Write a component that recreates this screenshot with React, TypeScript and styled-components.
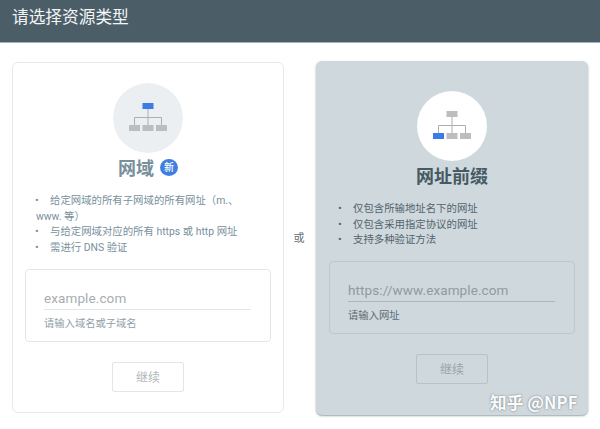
import React from "react";
import styled, { createGlobalStyle } from "styled-components";

const Global = createGlobalStyle`
  html, body { margin: 0; padding: 0; background: #fff; }
  body { width: 600px; height: 429px; overflow: hidden; font-family: Roboto, "Noto Sans CJK SC", sans-serif; }
  * { box-sizing: border-box; }
`;

const Page = styled.div`
  position: relative;
  width: 600px;
  height: 429px;
`;

const Header = styled.header`
  height: 43px;
  padding: 3px 12px 0;
  background: #4b5d67;
  border-bottom: 1px solid #9fb3bd;
  color: #f2f5f6;
  font-size: 16.7px;
  line-height: 26px;
  font-family: "Noto Sans CJK SC", sans-serif;
`;

const Main = styled.main`
  display: grid;
  grid-template-columns: 272px 32px 272px;
  align-items: start;
  padding: 18px 0 0 12px;
`;

const Card = styled.section<{ $active?: boolean }>`
  height: ${(p) => (p.$active ? 354 : 351)}px;
  margin-top: ${(p) => (p.$active ? 0 : 1)}px;
  padding: ${(p) => (p.$active ? "30px 13px 0" : "20px 12px 0")};
  display: flex;
  flex-direction: column;
  border-radius: 6px;
  background: ${(p) => (p.$active ? "#cfd8dc" : "#fff")};
  border: ${(p) => (p.$active ? "none" : "1px solid #e6e8ea")};
  box-shadow: ${(p) => (p.$active ? "0 1px 2px rgba(70,85,95,0.55)" : "none")};
`;

const Circle = styled.div<{ $active?: boolean }>`
  width: 70px;
  height: 70px;
  flex: none;
  align-self: center;
  display: flex;
  align-items: center;
  justify-content: center;
  border-radius: 50%;
  background: ${(p) => (p.$active ? "#fff" : "#eceff1")};
`;

const TitleRow = styled.div`
  height: 28px;
  display: flex;
  align-items: center;
  justify-content: center;
  gap: 6px;
`;

const Title = styled.h2<{ $active?: boolean }>`
  margin: 0;
  font: 700 18px/28px "Noto Sans CJK SC", sans-serif;
  color: ${(p) => (p.$active ? "#455a64" : "#78909c")};
`;

const Badge = styled.span`
  width: 18px;
  height: 17px;
  display: flex;
  align-items: center;
  justify-content: center;
  border-radius: 50%;
  background: #3f7fe0;
  color: #fff;
  font: 500 10px/1 "Noto Sans CJK SC", sans-serif;
`;

const Features = styled.ul<{ $active?: boolean }>`
  margin: 12px 0 0;
  padding: 0 8px 0 ${(p) => (p.$active ? 10 : 11)}px;
  list-style: none;
  font: 400 10.4px/15.7px Roboto, "Noto Sans CJK SC", sans-serif;
  color: ${(p) => (p.$active ? "#51646e" : "#78909c")};
`;

const Feature = styled.li`
  &::before {
    content: "•";
    display: inline-block;
    width: 15px;
    margin-left: -1px;
    font-size: 11px;
  }
`;

const InputBox = styled.div<{ $active?: boolean }>`
  flex: none;
  height: 73px;
  margin-top: 13px;
  padding: 18px 19px 0 18px;
  border-radius: 4px;
  border: 1px solid ${(p) => (p.$active ? "#bcc8ce" : "#e3e6e8")};
`;

const FieldText = styled.div<{ $active?: boolean }>`
  height: 22px;
  font: 400 13.5px/20px Roboto, sans-serif;
  letter-spacing: 0.1px;
  color: ${(p) => (p.$active ? "#8e9ba2" : "#a8adb0")};
  border-bottom: 1px solid ${(p) => (p.$active ? "#abb7bd" : "#e3e6e8")};
`;

const Helper = styled.div<{ $active?: boolean }>`
  margin-top: 5px;
  font: 400 10.3px/15px "Noto Sans CJK SC", sans-serif;
  color: ${(p) => (p.$active ? "#5c6c75" : "#90a0a8")};
`;

const Continue = styled.button<{ $active?: boolean }>`
  width: 72px;
  height: 30px;
  flex: none;
  align-self: center;
  margin-top: 20px;
  padding: 0;
  border-radius: 2px;
  border: 1px solid ${(p) => (p.$active ? "#b8c3c9" : "#e3e6e8")};
  background: transparent;
  color: ${(p) => (p.$active ? "#98a5ac" : "#b2b8bb")};
  font: 400 12px/1 "Noto Sans CJK SC", sans-serif;
`;

const Or = styled.div`
  align-self: start;
  margin-top: 168px;
  padding-right: 2px;
  text-align: center;
  font: 400 11px/16px "Noto Sans CJK SC", sans-serif;
  color: #5f6b72;
`;

const Watermark = styled.div`
  position: absolute;
  left: 490px;
  top: 390px;
  font: 700 16.6px/24px "Noto Sans CJK SC", sans-serif;
  letter-spacing: 0.1px;
  color: #fff;
  opacity: 0.92;
  text-shadow: 0 0 2px rgba(70, 80, 90, 0.8);
  white-space: nowrap;
`;

const SiteIcon = ({ highlight }: { highlight: "top" | "left" }) => {
  const blue = "#3b7de6";
  const gray = "#bdbdbd";
  return (
    <svg width="40" height="30" viewBox="0 0 40 30" aria-hidden="true">
      <path d="M20 6V22M6.500 22V14.500H33.500V22" fill="none" stroke="#aeaeae" strokeWidth="1" />
      <rect x="14.500" y="0" width="11" height="6" fill={highlight === "top" ? blue : gray} />
      <rect x="1" y="22" width="11" height="6" fill={highlight === "left" ? blue : gray} />
      <rect x="14.500" y="22" width="11" height="6" fill={gray} />
      <rect x="28" y="22" width="11" height="6" fill={gray} />
    </svg>
  );
};

export default function App() {
  return (
    <Page>
      <Global />
      <Header>请选择资源类型</Header>
      <Main>
        <Card>
          <Circle>
            <SiteIcon highlight="top" />
          </Circle>
          <TitleRow>
            <Title>网域</Title>
            <Badge>新</Badge>
          </TitleRow>
          <Features>
            <Feature>给定网域的所有子网域的所有网址（m.、www. 等）</Feature>
            <Feature>与给定网域对应的所有 https 或 http 网址</Feature>
            <Feature>需进行 DNS 验证</Feature>
          </Features>
          <InputBox>
            <FieldText>example.com</FieldText>
            <Helper>请输入域名或子域名</Helper>
          </InputBox>
          <Continue>继续</Continue>
        </Card>
        <Or>或</Or>
        <Card $active>
          <Circle $active>
            <SiteIcon highlight="left" />
          </Circle>
          <TitleRow>
            <Title $active>网址前缀</Title>
          </TitleRow>
          <Features $active>
            <Feature>仅包含所输地址名下的网址</Feature>
            <Feature>仅包含采用指定协议的网址</Feature>
            <Feature>支持多种验证方法</Feature>
          </Features>
          <InputBox $active>
            <FieldText $active>https://www.example.com</FieldText>
            <Helper $active>请输入网址</Helper>
          </InputBox>
          <Continue $active>继续</Continue>
        </Card>
      </Main>
      <Watermark>知乎 @NPF</Watermark>
    </Page>
  );
}
